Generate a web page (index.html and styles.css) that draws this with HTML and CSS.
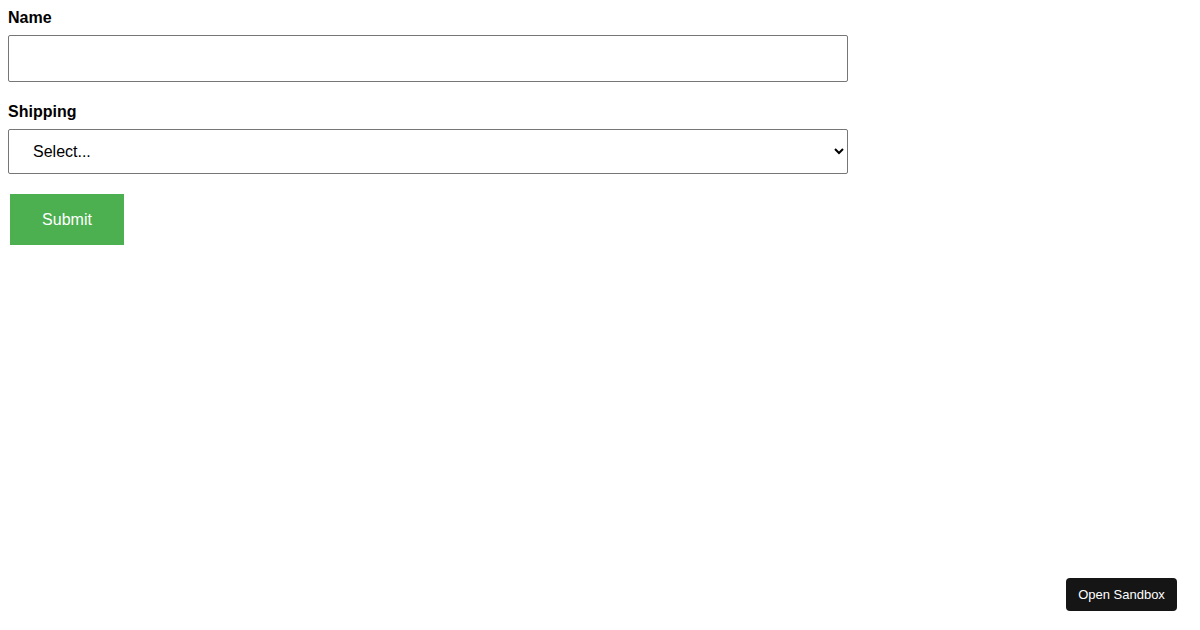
FILE: index.html
```html
<!DOCTYPE html>
<html>
<head>
<meta charset="utf-8">
<link rel="stylesheet" href="styles.css">
</head>
<body>
<form class="form">
  <div class="field">
    <label class="label" for="name">Name</label>
    <input class="input" id="name" type="text">
  </div>
  <div class="field">
    <label class="label" for="ship">Shipping</label>
    <select class="select" id="ship">
      <option>Select...</option>
    </select>
  </div>
  <button class="submit" type="button">Submit</button>
</form>
<a class="sandbox">Open Sandbox</a>
</body>
</html>
```
FILE: styles.css
```css
body {
  margin: 8px;
  font-family: "Liberation Sans", Arial, sans-serif;
  background: #fff;
  color: #000;
}
.form {
  width: 840px;
}
.field {
  margin-bottom: 20px;
}
.label {
  display: block;
  font-weight: bold;
  font-size: 16px;
  line-height: 19px;
  margin-bottom: 8px;
}
.input {
  display: block;
  box-sizing: border-box;
  width: 840px;
  height: 47px;
  border: 1px solid #767676;
  border-radius: 2px;
  padding: 0 12px;
  font-size: 16px;
  font-family: "Liberation Sans", Arial, sans-serif;
  margin: 0;
}
.select {
  display: block;
  box-sizing: border-box;
  width: 840px;
  height: 45px;
  border: 1px solid #767676;
  border-radius: 2px;
  padding: 0 20px;
  font-size: 16px;
  font-family: "Liberation Sans", Arial, sans-serif;
  background: #fff;
  color: #000;
  margin: 0;
}
.submit {
  display: block;
  margin: 0 0 0 2px;
  width: 114px;
  height: 51px;
  background: #4caf50;
  color: #fff;
  border: none;
  font-size: 16px;
  font-family: "Liberation Sans", Arial, sans-serif;
  padding: 0;
}
.sandbox {
  position: fixed;
  right: 23px;
  bottom: 19px;
  width: 111px;
  height: 33px;
  box-sizing: border-box;
  display: flex;
  align-items: center;
  justify-content: center;
  background: #151515;
  color: #fff;
  border-radius: 4px;
  font-size: 13px;
  font-family: "Liberation Sans", Arial, sans-serif;
}
```
